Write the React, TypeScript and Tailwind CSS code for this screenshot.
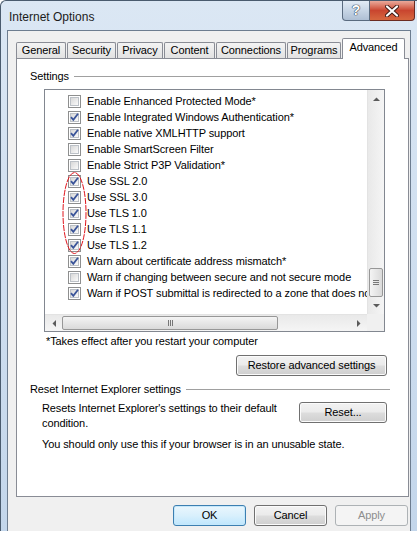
import React from 'react';

const rows: { label: string; on: boolean }[] = [
  { label: 'Enable Enhanced Protected Mode*', on: false },
  { label: 'Enable Integrated Windows Authentication*', on: true },
  { label: 'Enable native XMLHTTP support', on: true },
  { label: 'Enable SmartScreen Filter', on: false },
  { label: 'Enable Strict P3P Validation*', on: false },
  { label: 'Use SSL 2.0', on: true },
  { label: 'Use SSL 3.0', on: true },
  { label: 'Use TLS 1.0', on: true },
  { label: 'Use TLS 1.1', on: true },
  { label: 'Use TLS 1.2', on: true },
  { label: 'Warn about certificate address mismatch*', on: true },
  { label: 'Warn if changing between secure and not secure mode', on: false },
  { label: 'Warn if POST submittal is redirected to a zone that does not permit posts', on: true },
];

const tabs = [
  { name: 'General', w: 'w-[50px]' },
  { name: 'Security', w: 'w-[49px]' },
  { name: 'Privacy', w: 'w-[46px]' },
  { name: 'Content', w: 'w-[51px]' },
  { name: 'Connections', w: 'w-[70px]' },
  { name: 'Programs', w: 'w-[54px]' },
];

function Check({ on }: { on: boolean }) {
  return (
    <span className="relative flex h-[13px] w-[13px] shrink-0 items-center justify-center border border-[#8e8f8f] bg-white">
      <span className="h-[9px] w-[9px] border border-[#bcc1c7] bg-gradient-to-br from-[#d8d8d8] to-[#fafafa]" />
      {on && (
        <svg className="absolute left-0 top-0" width="11" height="11" viewBox="0 0 11 11">
          <path d="M2 5.2 L4.3 7.8 L9 1.8" fill="none" stroke="#3a5499" strokeWidth="1.8" />
        </svg>
      )}
    </span>
  );
}

function Arrow({ dir }: { dir: 'up' | 'down' | 'left' | 'right' }) {
  const d = {
    up: 'M0 4 L3.5 0.5 L7 4 Z',
    down: 'M0 0 L3.5 3.5 L7 0 Z',
    left: 'M4 0 L0.5 3.5 L4 7 Z',
    right: 'M0 0 L3.5 3.5 L0 7 Z',
  }[dir];
  const horiz = dir === 'up' || dir === 'down';
  return (
    <svg width={horiz ? 7 : 4} height={horiz ? 4 : 7} viewBox={horiz ? '0 0 7 4' : '0 0 4 7'}>
      <path d={d} fill="#5b5b5b" />
    </svg>
  );
}

function Button({ label, w, variant }: { label: string; w: string; variant?: 'default' | 'disabled' }) {
  const base = 'flex h-[21px] items-center justify-center rounded-[3px] border';
  if (variant === 'disabled') {
    return <div className={`${base} ${w} border-[#adb2b5] bg-[#f4f4f4] text-[#8d8d8d]`}>{label}</div>;
  }
  if (variant === 'default') {
    return (
      <div className={`${base} ${w} border-[#3c7fb1] bg-gradient-to-b from-[#eaf6fd] via-[#d9f0fc] to-[#bee6fd] shadow-[inset_0_0_0_1px_#c5e8fb]`}>
        {label}
      </div>
    );
  }
  return (
    <div className={`${base} ${w} border-[#707070] bg-[linear-gradient(#f2f2f2,#ebebeb_48%,#dddddd_52%,#cfcfcf)] shadow-[inset_0_0_0_1px_#fbfbfb]`}>
      {label}
    </div>
  );
}

export default function App() {
  return (
    <div className="h-[536px] w-[417px] overflow-hidden bg-white font-['Segoe_UI','Liberation_Sans',Arial,sans-serif] text-[11px] tracking-[-0.1px] text-black">
      {/* window frame */}
      <div className="flex h-[531px] flex-col rounded-tl-[6px] border-l border-t border-[#4a5b6e] bg-gradient-to-b from-[#dbe7f4] to-[#c3d6eb]">
        {/* title bar */}
        <div className="flex h-[29px] items-start">
          <div className="ml-[8px] mt-[7px] text-[12px] tracking-normal text-[#1b1b1b]">Internet Options</div>
          <div className="ml-auto flex">
            <div className="flex h-[20px] w-[28px] items-center justify-center rounded-bl-[4px] border border-t-0 border-[#5a6b7f] bg-gradient-to-b from-[#e2ebf5] via-[#c7d5e5] to-[#aebfd4] text-[14px] font-bold text-white [text-shadow:0_0_1px_#2b3a4c,0_0_1px_#2b3a4c,0_0_1px_#2b3a4c]">
              ?
            </div>
            <div className="flex h-[20px] w-[45px] items-center justify-center rounded-br-[4px] border border-l-0 border-t-0 border-[#6b2b22] bg-gradient-to-b from-[#e9a99b] via-[#c9452f] to-[#d6673f]">
              <svg width="14" height="12" viewBox="0 0 14 12">
                <path d="M2 1.5 L12 10.5 M12 1.5 L2 10.5" stroke="#3d1a14" strokeWidth="4" strokeLinecap="round" />
                <path d="M2 1.5 L12 10.5 M12 1.5 L2 10.5" stroke="#ffffff" strokeWidth="2.2" strokeLinecap="round" />
              </svg>
            </div>
            <div className="w-[2px]" />
          </div>
        </div>

        <div className="flex flex-1">
          <div className="w-[6px]" />
          {/* client area */}
          <div className="flex w-[404px] flex-col border-l border-t border-r border-[#6d7d90] bg-[#f0f0f0] pl-[8px]">
            {/* tabs */}
            <div className="mt-[7px] flex h-[21px] items-end gap-[1px]">
              {tabs.map((t) => (
                <div
                  key={t.name}
                  className={`${t.w} flex h-[17px] items-center justify-center rounded-t-[2px] border border-b-0 border-[#898c95] bg-gradient-to-b from-[#f3f3f3] to-[#e1e1e1] pb-[1px]`}
                >
                  {t.name}
                </div>
              ))}
              <div className="relative z-10 flex h-[21px] w-[63px] items-center justify-center rounded-t-[2px] border border-b-0 border-[#898c95] bg-white pb-[4px]">
                Advanced
              </div>
            </div>

            {/* panel */}
            <div className="-mt-px flex h-[439px] w-[393px] flex-col border border-[#898c95] bg-white pl-[13px]">
              <div className="mt-[9px] flex h-[16px] items-center">
                <span>Settings</span>
                <span className="ml-[5px] mr-[18px] h-px flex-1 bg-[#a0a0a0]" />
              </div>

              {/* listbox */}
              <div className="ml-[14px] mt-[5px] flex h-[243px] w-[341px] flex-col border border-[#828790]">
                <div className="flex h-[224px]">
                  <div className="relative w-[322px] overflow-hidden pt-[3px]">
                    {rows.map((r) => (
                      <div key={r.label} className="flex h-[16px] items-center whitespace-nowrap pl-[23px]">
                        <Check on={r.on} />
                        <span className="ml-[6px]">{r.label}</span>
                      </div>
                    ))}
                    <svg className="absolute left-[17px] top-[81px]" width="27" height="84" viewBox="0 0 27 84">
                      <ellipse cx="12.5" cy="42" rx="11.5" ry="40.5" fill="none" stroke="#e0141b" strokeWidth="1" strokeDasharray="6 1" />
                    </svg>
                  </div>
                  {/* vertical scrollbar */}
                  <div className="flex w-[17px] flex-col border-l border-[#e3e3e3] bg-gradient-to-r from-[#e9e9e9] to-[#f5f5f5]">
                    <div className="flex h-[17px] items-center justify-center">
                      <Arrow dir="up" />
                    </div>
                    <div className="flex-1" />
                    <div className="mx-[1px] flex h-[29px] items-center justify-center rounded-[2px] border border-[#979797] bg-gradient-to-r from-[#f4f4f4] to-[#dadada]">
                      <div className="flex flex-col gap-[1px]">
                        <span className="h-px w-[6px] bg-[#777]" />
                        <span className="h-px w-[6px] bg-[#777]" />
                        <span className="h-px w-[6px] bg-[#777]" />
                      </div>
                    </div>
                    <div className="flex h-[17px] items-center justify-center">
                      <Arrow dir="down" />
                    </div>
                  </div>
                </div>
                {/* horizontal scrollbar */}
                <div className="flex h-[17px]">
                  <div className="flex w-[322px] border-t border-[#e3e3e3] bg-gradient-to-b from-[#e9e9e9] to-[#f5f5f5]">
                    <div className="flex w-[17px] items-center justify-center">
                      <Arrow dir="left" />
                    </div>
                    <div className="my-[1px] flex w-[216px] items-center justify-center gap-[1px] rounded-[2px] border border-[#979797] bg-gradient-to-b from-[#f4f4f4] to-[#dadada]">
                      <span className="h-[6px] w-px bg-[#777]" />
                      <span className="h-[6px] w-px bg-[#777]" />
                      <span className="h-[6px] w-px bg-[#777]" />
                    </div>
                    <div className="flex-1" />
                    <div className="flex w-[17px] items-center justify-center">
                      <Arrow dir="right" />
                    </div>
                  </div>
                  <div className="w-[17px] bg-[#f0f0f0]" />
                </div>
              </div>

              <div className="ml-[16px] mt-[1px] flex h-[16px] items-center">*Takes effect after you restart your computer</div>

              <div className="mr-[21px] mt-[6px] flex justify-end">
                <Button label="Restore advanced settings" w="w-[151px]" />
              </div>

              <div className="mt-[5px] flex h-[16px] items-center">
                <span>Reset Internet Explorer settings</span>
                <span className="ml-[5px] mr-[18px] h-px flex-1 bg-[#a0a0a0]" />
              </div>

              <div className="ml-[12px] mr-[21px] mt-[4px] flex justify-between">
                <div className="leading-[15px]">
                  Resets Internet Explorer's settings to their default
                  <br />
                  condition.
                </div>
                <div className="mt-[1px]">
                  <Button label="Reset..." w="w-[88px]" />
                </div>
              </div>

              <div className="ml-[12px] mt-[5px] flex h-[16px] items-center">
                You should only use this if your browser is in an unusable state.
              </div>
            </div>

            {/* dialog buttons */}
            <div className="mr-[2px] mt-[8px] flex justify-end gap-[8px]">
              <Button label="OK" w="w-[73px]" variant="default" />
              <Button label="Cancel" w="w-[73px]" />
              <Button label="Apply" w="w-[73px]" variant="disabled" />
            </div>
          </div>
          <div className="flex-1" />
        </div>
      </div>
    </div>
  );
}
